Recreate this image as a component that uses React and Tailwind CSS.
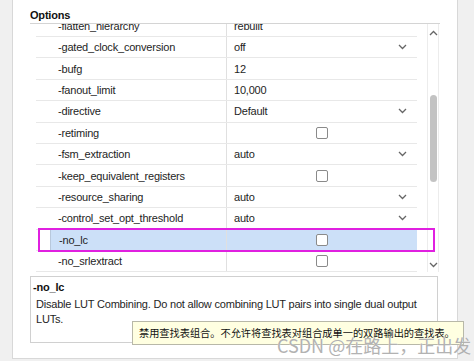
import React from "react";

const rows = [
  { name: "-flatten_hierarchy", value: "rebuilt", kind: "text" },
  { name: "-gated_clock_conversion", value: "off", kind: "select" },
  { name: "-bufg", value: "12", kind: "text" },
  { name: "-fanout_limit", value: "10,000", kind: "text" },
  { name: "-directive", value: "Default", kind: "select" },
  { name: "-retiming", kind: "check" },
  { name: "-fsm_extraction", value: "auto", kind: "select" },
  { name: "-keep_equivalent_registers", kind: "check" },
  { name: "-resource_sharing", value: "auto", kind: "select" },
  { name: "-control_set_opt_threshold", value: "auto", kind: "select" },
  { name: "-no_lc", kind: "check", selected: true },
  { name: "-no_srlextract", kind: "check" },
];

const Chevron = ({ up = false, className = "" }) => (
  <svg width="9" height="6" viewBox="0 0 9 6" className={className}>
    <polyline
      points={up ? "1,5 4.5,1.5 8,5" : "1,1 4.5,4.5 8,1"}
      fill="none"
      stroke="#666"
      strokeWidth="1.3"
    />
  </svg>
);

const OptionRow = ({ row }) => (
  <div className="flex h-[21.4px] border-b border-[#e8e8e8]">
    <div className="w-[14px] shrink-0" />
    <div
      className={`w-[177px] shrink-0 flex items-center pl-[8px] border-r border-[#e0e0e0] whitespace-nowrap ${
        row.selected ? "bg-[#cce0f8] border-l border-l-[#b8c8dc]" : ""
      }`}
    >
      {row.name}
    </div>
    <div className={`flex-1 flex items-center ${row.selected ? "bg-[#cce0f8]" : ""}`}>
      {row.kind === "check" ? (
        <div className="flex-1 flex justify-center">
          <div className="w-[12px] h-[12px] rounded-[2px] border border-[#8a8a8a] bg-white" />
        </div>
      ) : (
        <div className="flex-1 flex items-center justify-between pl-[7px] pr-[10px]">
          <span>{row.value}</span>
          {row.kind === "select" && <Chevron />}
        </div>
      )}
    </div>
  </div>
);

export default function App() {
  return (
    <div className="relative w-[474px] h-[361px] bg-[#f0f0f0] overflow-hidden font-['Liberation_Sans',Arial,sans-serif] text-[11px] tracking-[-0.2px] text-[#1e1e1e] leading-[14px]">
      <div className="ml-[12px] w-[446px] h-[359px] bg-white border-l border-r border-b border-[#d8d8d8] pl-[17px]">
        {/* header */}
        <div className="w-[410px] h-[24px] pt-[8px] border-b border-[#d4d4d4] font-bold text-[#111]">Options</div>

        {/* table + scrollbar */}
        <div className="flex w-[410px] h-[248px]">
          <div className="ml-[6px] w-[381px] overflow-hidden">
            <div className="-mt-[8.4px]">
              {rows.map((row) => (
                <OptionRow key={row.name} row={row} />
              ))}
            </div>
          </div>
          <div className="ml-[10px] w-[12px] border-l border-r border-[#ececec] flex flex-col items-center">
            <Chevron up className="mt-[6px]" />
            <div className="mt-[59px] w-[7px] h-[87px] rounded-[4px] bg-[#c3c3c3]" />
            <Chevron className="mt-[80px]" />
          </div>
        </div>

        {/* description */}
        <div className="mt-[4px] w-[408px] h-[67px] border border-[#d0d0d0] pt-[3px] pl-[2px]">
          <div className="font-bold text-[#111]">-no_lc</div>
          <div className="pl-[3px] pt-[3px] leading-[15px] whitespace-nowrap">
            Disable LUT Combining. Do not allow combining LUT pairs into single dual output
            <br />
            LUTs.
          </div>
        </div>
      </div>

      {/* selection highlight */}
      <div className="absolute left-[38px] top-[228px] w-[397px] h-[24px] border-[2.5px] border-[#e020e0]" />

      {/* tooltip */}
      <div className="absolute left-[132px] top-[321px] w-[332px] h-[24px] bg-[#ffffe1] border border-[#b8b8a8] flex items-center pl-[6px] text-[10.2px] tracking-normal text-[#111] font-['Noto_Sans_CJK_SC',sans-serif]">
        禁用查找表组合。不允许将查找表对组合成单一的双路输出的查找表。
      </div>

      {/* watermark */}
      <div className="absolute left-[277px] top-[334px] text-[18px] tracking-normal leading-[22px] text-[#b2b2b2] font-['Noto_Sans_CJK_SC',sans-serif] [text-shadow:0_0_1px_#fff]">
        CSDN @在路上，正出发
      </div>
    </div>
  );
}
